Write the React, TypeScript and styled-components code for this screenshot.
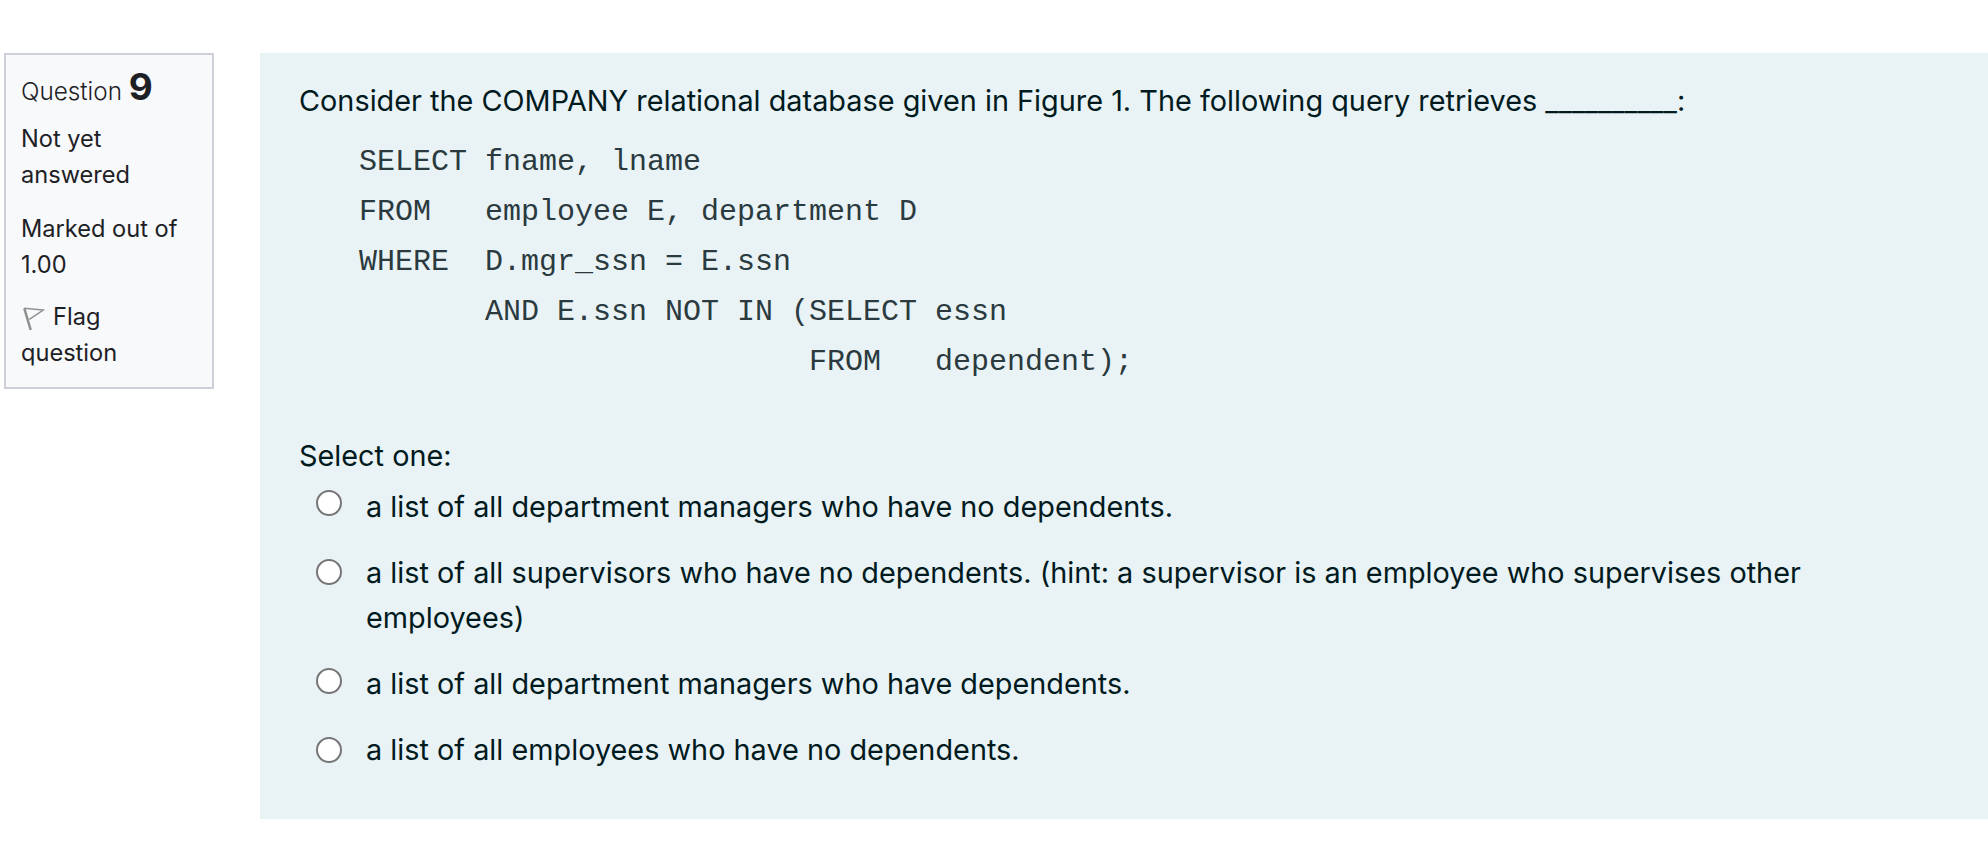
import React from "react";
import styled, { createGlobalStyle } from "styled-components";

const Global = createGlobalStyle`
  html, body { margin: 0; padding: 0; background: #fff; }
  body { font-family: Inter, "Liberation Sans", sans-serif; color: #001a1e; overflow: hidden; }
`;

const Page = styled.div`
  display: flex;
  align-items: flex-start;
  width: 1988px;
  height: 868px;
  padding: 53px 0 0 4px;
  box-sizing: border-box;
`;

const Info = styled.aside`
  flex: none;
  width: 210px;
  height: 336px;
  box-sizing: border-box;
  margin-right: 46px;
  padding: 10px 15px 0;
  background: #f8f9fb;
  border: 2px solid #cdd0d9;
  color: #1d2125;
  font-size: 23.6px;
  line-height: 36px;
`;

const QTitle = styled.h3`
  margin: 0 0 8px;
  font-size: 24.3px;
  line-height: 44px;
  font-weight: 300;
`;

const QNum = styled.span`
  font-size: 37px;
  font-weight: 700;
`;

const InfoLine = styled.div<{ $gap: number }>`
  margin-bottom: ${(p) => p.$gap}px;
`;

const FlagIcon = styled.svg`
  width: 22px;
  height: 24px;
  vertical-align: -6px;
  margin: 0 8px 0 2px;
`;

const Content = styled.main`
  flex: 1;
  height: 766px;
  box-sizing: border-box;
  padding: 26px 0 0 39px;
  background: #e9f2f5;
  font-size: 28.85px;
  line-height: 44px;
`;

const Prompt = styled.p`
  margin: 0 0 14px;
`;

const Code = styled.pre`
  margin: 0 0 47px 60px;
  font-family: "Liberation Mono", monospace;
  font-size: 30px;
  line-height: 50px;
  color: #2a3a3e;
`;

const SelectLabel = styled.div`
  margin-bottom: 7px;
`;

const Option = styled.label`
  display: flex;
  align-items: flex-start;
  padding-left: 16px;
  margin-bottom: 21.9px;
  line-height: 44.4px;
`;

const Radio = styled.span<{ $top: number }>`
  flex: none;
  box-sizing: border-box;
  width: 26px;
  height: 26px;
  margin: ${(p) => p.$top}px 24px 0 1px;
  border-radius: 50%;
  background: #fff;
  border: 2px solid #767676;
`;

const OptionText = styled.span`
  max-width: 1480px;
`;

const options = [
  { top: 5, text: "a list of all department managers who have no dependents." },
  { top: 7.3, text: "a list of all supervisors who have no dependents. (hint: a supervisor is an employee who supervises other employees)" },
  { top: 6, text: "a list of all department managers who have dependents." },
  { top: 8.3, text: "a list of all employees who have no dependents." },
];

export default function App() {
  return (
    <Page>
      <Global />
      <Info>
        <QTitle>Question <QNum>9</QNum></QTitle>
        <InfoLine $gap={18}>Not yet answered</InfoLine>
        <InfoLine $gap={16}>Marked out of 1.00</InfoLine>
        <InfoLine $gap={0}>
          <FlagIcon viewBox="0 0 22 24" fill="none">
            <path d="M1.3 1.3 L7.7 23" stroke="#8f8f8f" strokeWidth="2.5" />
            <path d="M1.3 1.3 L20.3 3 L6.3 12.3" stroke="#8f8f8f" strokeWidth="1.5" />
          </FlagIcon>
          Flag question
        </InfoLine>
      </Info>
      <Content>
        <Prompt>Consider the COMPANY relational database given in Figure 1. The following query retrieves __________:</Prompt>
        <Code>{`SELECT fname, lname
FROM   employee E, department D
WHERE  D.mgr_ssn = E.ssn
       AND E.ssn NOT IN (SELECT essn
                         FROM   dependent);`}</Code>
        <SelectLabel>Select one:</SelectLabel>
        {options.map((o) => (
          <Option key={o.text}>
            <Radio $top={o.top} />
            <OptionText>{o.text}</OptionText>
          </Option>
        ))}
      </Content>
    </Page>
  );
}
